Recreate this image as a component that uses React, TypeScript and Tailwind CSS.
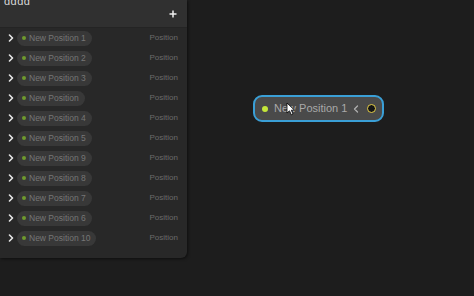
import React from "react";

const rows = [
  "New Position 1",
  "New Position 2",
  "New Position 3",
  "New Position",
  "New Position 4",
  "New Position 5",
  "New Position 9",
  "New Position 8",
  "New Position 7",
  "New Position 6",
  "New Position 10",
];

function Chevron() {
  return (
    <svg width="6" height="8" viewBox="0 0 6 8" className="shrink-0">
      <path d="M1.5 1 L4.5 4 L1.5 7" stroke="#e8e8e8" strokeWidth="1.6" fill="none" strokeLinecap="round" strokeLinejoin="round" />
    </svg>
  );
}

export default function App() {
  return (
    <div
      className="relative w-[474px] h-[296px] overflow-hidden bg-[#1d1d1d]"
      style={{ fontFamily: '"Liberation Sans", Arial, sans-serif' }}
    >
      <div className="w-[187px] h-[258px] bg-[#282828] rounded-br-[6px] shadow-[1px_1px_3px_rgba(0,0,0,0.5)] flex flex-col overflow-hidden">
        <div className="h-[28px] bg-[#303030] border-b border-[#242424] flex flex-col px-[4px] shrink-0">
          <div className="text-[11px] leading-[11px] text-[#d8d8d8] -mt-[4px] tracking-[0.5px]">dddd</div>
          <div className="flex justify-end pr-[6px] mt-[3px]">
            <svg width="8" height="8" viewBox="0 0 8 8">
              <path d="M4 0.5 V7.5 M0.5 4 H7.5" stroke="#f0f0f0" strokeWidth="1.5" />
            </svg>
          </div>
        </div>
        <div className="flex flex-col">
          {rows.map((r) => (
            <div key={r} className="h-[20px] flex items-center pl-[8px] pr-[9px]">
              <Chevron />
              <div className="ml-[3px] h-[15px] rounded-full bg-[#383838] flex items-center pl-[5px] pr-[6px] gap-[3px]">
                <div className="w-[4px] h-[4px] rounded-full bg-[#6f9a2e]" />
                <span className="text-[8.5px] leading-none text-[#767676]">{r}</span>
              </div>
              <div className="flex-1" />
              <span className="text-[8px] leading-none text-[#6a6a6a]">Position</span>
            </div>
          ))}
        </div>
      </div>

      <div className="absolute left-[253px] top-[95px] w-[131px] h-[27px] rounded-[9px] border-2 border-[#3a9fd6] bg-[#4a4a4a] flex items-center pl-[7px] pr-[5px]">
        <div className="w-[6px] h-[6px] rounded-full bg-[#c4e63a]" />
        <span className="ml-[6px] text-[11px] leading-none text-[#a9a9a9]">New Position 1</span>
        <div className="flex-1" />
        <svg width="6" height="8" viewBox="0 0 6 8">
          <path d="M4.5 1 L1.5 4 L4.5 7" stroke="#b0b0b0" strokeWidth="1.3" fill="none" strokeLinecap="round" strokeLinejoin="round" />
        </svg>
        <div className="ml-[8px] mr-[1px] w-[9px] h-[9px] rounded-full border-[1.5px] border-[#e6cf4a] bg-[#151515]" />
      </div>

      <svg className="absolute left-[286px] top-[102px]" width="10" height="14" viewBox="0 0 10 14">
        <path d="M1 1 L1 11 L3.5 8.8 L5.3 12.8 L7 12 L5.3 8.2 L8.5 8.2 Z" fill="#ffffff" stroke="#000000" strokeWidth="0.8" strokeLinejoin="round" />
      </svg>
    </div>
  );
}
